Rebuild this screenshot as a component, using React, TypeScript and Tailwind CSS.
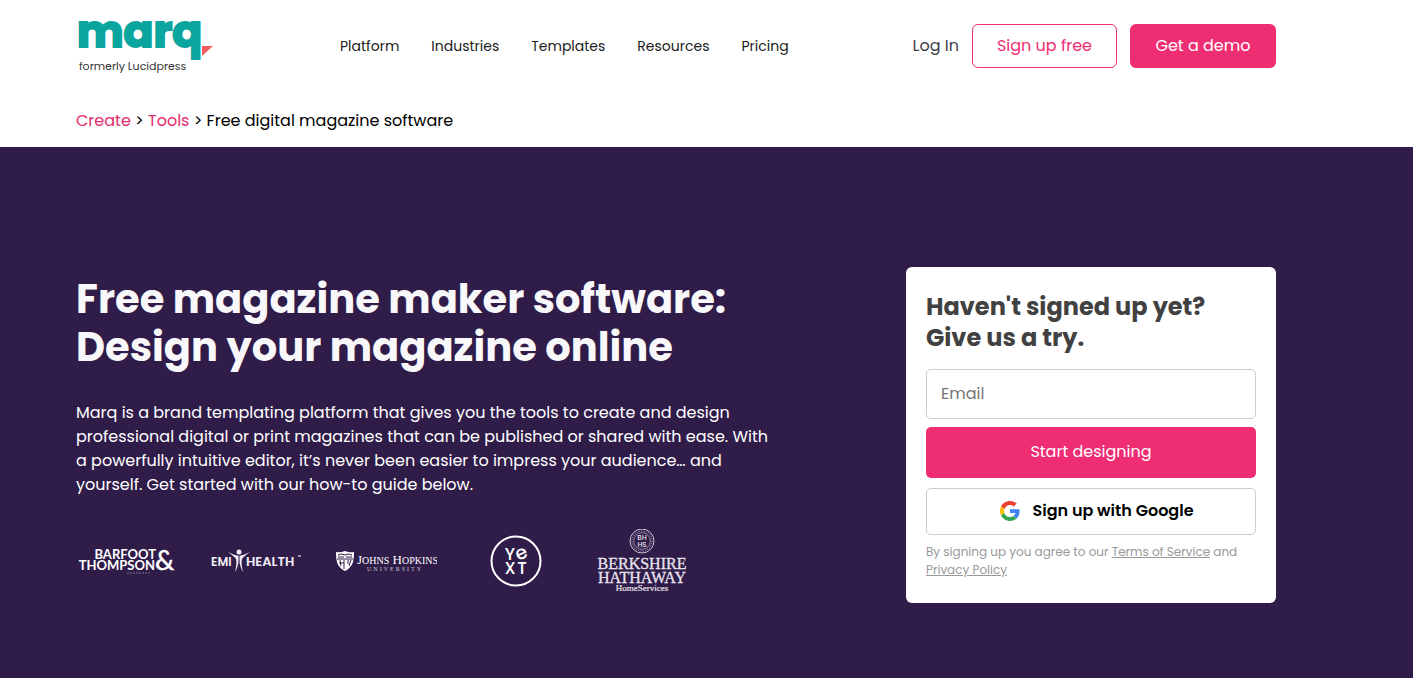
import React from "react";

const navItems = ["Platform", "Industries", "Templates", "Resources", "Pricing"];

function MarqLogo() {
  return (
    <svg width="138" height="60" viewBox="0 0 138 60" role="img" aria-label="marq, formerly Lucidpress" className="block overflow-visible">
      <text x="1" y="31" fontSize="44" fontWeight="700" fill="#0ba5a0" stroke="#0ba5a0" strokeWidth="2">marq</text>
      <path d="M126 30h11l-11 10z" fill="#f65c5c" />
      <text x="3" y="54" fontSize="11" fill="#333">formerly Lucidpress</text>
    </svg>
  );
}

function GoogleIcon() {
  return (
    <svg width="20" height="20" viewBox="0 0 48 48" aria-hidden="true">
      <path fill="#EA4335" d="M24 9.5c3.54 0 6.71 1.22 9.21 3.6l6.85-6.85C35.9 2.38 30.47 0 24 0 14.62 0 6.51 5.38 2.56 13.22l7.98 6.19C12.43 13.72 17.74 9.5 24 9.5z" />
      <path fill="#4285F4" d="M46.98 24.55c0-1.57-.15-3.09-.38-4.55H24v9.02h12.94c-.58 2.96-2.26 5.48-4.78 7.18l7.73 6c4.51-4.18 7.09-10.36 7.09-17.65z" />
      <path fill="#FBBC05" d="M10.53 28.59c-.48-1.45-.76-2.99-.76-4.59s.27-3.14.76-4.59l-7.98-6.19C.92 16.46 0 20.12 0 24c0 3.88.92 7.54 2.56 10.78l7.97-6.19z" />
      <path fill="#34A853" d="M24 48c6.48 0 11.93-2.13 15.89-5.81l-7.73-6c-2.15 1.45-4.92 2.3-8.16 2.3-6.26 0-11.57-4.22-13.47-9.91l-7.98 6.19C6.51 42.62 14.62 48 24 48z" />
    </svg>
  );
}

function BarfootLogo() {
  return (
    <svg width="102" height="64" viewBox="0 0 102 64" role="img" aria-label="Barfoot & Thompson" fill="#fff" fontFamily="Lato, sans-serif">
      <text x="81" y="30" fontSize="13" fontWeight="700" textAnchor="end">BARFOOT</text>
      <text x="80" y="41" fontSize="13" fontWeight="700" textAnchor="end">THOMPSON</text>
      <text x="80" y="41" fontSize="27" fontWeight="400" stroke="#fff" strokeWidth=".5">&amp;</text>
      <path d="M52 44h23" stroke="#fff" strokeOpacity=".35" strokeDasharray="2 1" />
    </svg>
  );
}

function EmiLogo() {
  return (
    <svg width="102" height="64" viewBox="0 0 102 64" role="img" aria-label="EMI Health" fill="#f1eef5" fontFamily="Poppins, sans-serif">
      <text x="6" y="37" fontSize="12" fontWeight="600">EMI</text>
      <circle cx="34" cy="23" r="2.5" />
      <path d="M23 23c4 2 7 3 11 4 4-1 7-2 11-4-4 3-7 5-8 7-1 4 0 8 1 13-2-3-3-7-4-12-1 5-2 9-4 12 1-5 2-9 1-13-1-2-4-4-8-7z" />
      <path d="M34 27v6" stroke="#2f1c49" strokeWidth="1" />
      <text x="41" y="37" fontSize="13" fontWeight="600">HEALTH</text>
      <path d="M93 27h3" stroke="#fff" strokeWidth="1" />
    </svg>
  );
}

function HopkinsLogo() {
  return (
    <svg width="102" height="64" viewBox="0 0 102 64" role="img" aria-label="Johns Hopkins University" fill="#fff" fontFamily="Liberation Serif, serif">
      <path d="M1 23q4 1 9-1 5 2 9 1c0 9-1 15-9 19C2 38 1 32 1 23z" />
      <g fill="none" stroke="#2f1c49" strokeWidth="1">
        <path d="M3 26q3-2 7 0 4-2 7 0M3 28h6m2 0h6M2 30h16M5 31l1 6m3-6v9m4-9v4m3-4-2 6M4 34h5" />
      </g>
      <text x="22" y="35" fontSize="13">J<tspan fontSize="10">OHNS</tspan> H<tspan fontSize="10">OPKINS</tspan></text>
      <text x="32" y="42" fontSize="6" letterSpacing="2" fillOpacity=".75">UNIVERSITY</text>
    </svg>
  );
}

function YextLogo() {
  return (
    <svg width="102" height="64" viewBox="0 0 102 64" role="img" aria-label="Yext" fill="#fff">
      <circle cx="51" cy="32" r="24.5" fill="none" stroke="#fff" strokeWidth="2" />
      <g fontSize="17" fontWeight="500" textAnchor="middle">
        <text x="45" y="31">Y</text>
        <text x="57" y="30" transform="rotate(-24 57 26)" fontSize="19">e</text>
        <text x="45" y="45">X</text>
        <text x="57" y="45">T</text>
      </g>
    </svg>
  );
}

function BerkshireLogo() {
  return (
    <svg width="102" height="64" viewBox="0 0 102 64" role="img" aria-label="Berkshire Hathaway HomeServices" fill="#e9e4ef" textAnchor="middle">
      <g fill="none" stroke="#cbc4d5">
        <circle cx="47" cy="12" r="12" strokeWidth="1" />
        <circle cx="47" cy="12" r="10" strokeWidth="1.6" strokeDasharray="1 1.3" strokeOpacity=".55" />
        <circle cx="47" cy="12" r="8.3" strokeWidth=".6" />
      </g>
      <text x="47" y="11" fontSize="7" fontWeight="500">BH</text>
      <text x="47" y="18" fontSize="7" fontWeight="500">HS</text>
      <g fontFamily="Liberation Serif, serif">
        <text x="47" y="40" fontSize="16" stroke="#e9e4ef" strokeWidth=".3">BERKSHIRE</text>
        <text x="47" y="54" fontSize="16" stroke="#e9e4ef" strokeWidth=".3">HATHAWAY</text>
        <text x="47" y="62" fontSize="9" stroke="#e9e4ef" strokeWidth=".2">HomeServices</text>
      </g>
    </svg>
  );
}

export default function App() {
  return (
    <div className="flex min-h-screen flex-col bg-white font-['Poppins','Inter',sans-serif] text-base text-black">
      <header className="flex h-[92px] items-center pr-[137px] pl-[76px]">
        <a href="#home"><MarqLogo /></a>
        <nav className="ml-[126px] flex gap-8 text-sm text-[#212121]">
          {navItems.map((item) => (
            <a key={item} href={"#" + item.toLowerCase()}>{item}</a>
          ))}
        </nav>
        <div className="ml-auto flex items-center gap-[13px]">
          <a href="#login" className="text-[#3a414a]">Log In</a>
          <a href="#signup" className="flex h-11 w-[145px] items-center justify-center rounded-md border border-[#ee2d72] text-[#ee2d72]">Sign up free</a>
          <a href="#demo" className="flex h-11 w-[146px] items-center justify-center rounded-md bg-[#ee2d72] text-white">Get a demo</a>
        </div>
      </header>

      <nav aria-label="Breadcrumb" className="h-[55px] pt-[17px] pl-[76px]">
        <a href="#create" className="text-[#e32c6d]">Create</a> &gt;{" "}
        <a href="#tools" className="text-[#e32c6d]">Tools</a> &gt; Free digital magazine software
      </nav>

      <main className="flex grow items-start justify-between bg-[#2f1c49] pt-[120px] pr-[137px] pb-[75px] pl-[76px]">
        <section className="pt-2 text-[#f8f7fa]">
          <h1 className="text-[40px] leading-[48px] font-bold">
            Free magazine maker software:<br />Design your magazine online
          </h1>
          <p className="mt-[30px] leading-6 text-white">
            Marq is a brand templating platform that gives you the tools to create and design<br />
            professional digital or print magazines that can be published or shared with ease. With<br />
            a powerfully intuitive editor, it’s never been easier to impress your audience… and<br />
            yourself. Get started with our how-to guide below.
          </p>
          <div className="mt-8 -ml-px flex gap-7">
            <BarfootLogo />
            <EmiLogo />
            <HopkinsLogo />
            <YextLogo />
            <BerkshireLogo />
          </div>
        </section>

        <form className="w-[370px] shrink-0 rounded-md bg-white px-5 py-6" onSubmit={(e) => e.preventDefault()}>
          <h2 className="text-2xl leading-[31px] font-bold text-[#414141]">Haven't signed up yet?<br />Give us a try.</h2>
          <input type="email" aria-label="Email" placeholder="Email" className="mt-4 block h-[50px] w-full rounded-[5px] border border-[#ccc] px-[14px] pb-0.5 placeholder:text-[#757575]" />
          <button type="submit" className="mt-2 block h-[51px] w-full rounded-[5px] bg-[#ee2d72] pb-0.5 text-white">Start designing</button>
          <button type="button" className="mt-[10px] flex h-[47px] w-full items-center justify-center gap-3 rounded-[5px] border border-[#ccc] pb-0.5 pl-3 font-semibold">
            <GoogleIcon />
            Sign up with Google
          </button>
          <p className="mt-2 text-xs leading-[18px] text-[#999]">
            By signing up you agree to our <a href="#terms" className="underline">Terms of Service</a> and<br />
            <a href="#privacy" className="underline">Privacy Policy</a>
          </p>
        </form>
      </main>
    </div>
  );
}
